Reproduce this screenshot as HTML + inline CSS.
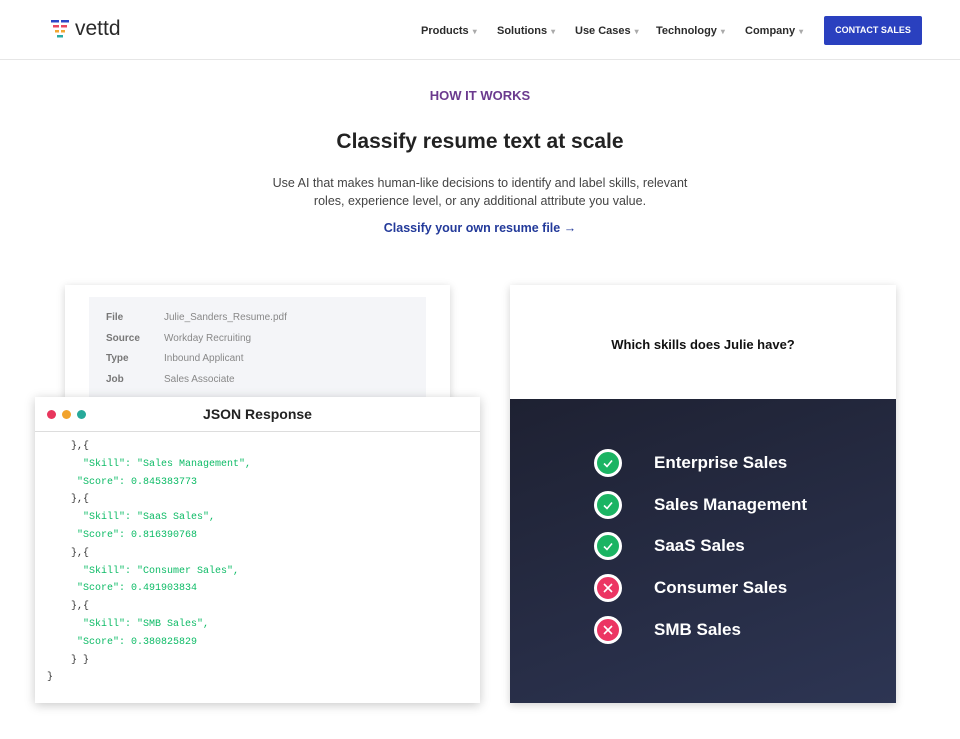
<!DOCTYPE html>
<html><head><meta charset="utf-8"><style>
*{margin:0;padding:0;box-sizing:border-box}
body{width:960px;height:739px;background:#fff;font-family:"Liberation Sans",sans-serif;position:relative;overflow:hidden;color:#222}
.hdr{position:absolute;left:0;top:0;width:960px;height:60px;border-bottom:1px solid #e6e6e6}
.nav{position:absolute;top:24px;font-size:11px;font-weight:bold;color:#2b2b2b}
.nav span{color:#aaa;font-size:8px;margin-left:4px}
.btn{position:absolute;left:824px;top:16px;width:98px;height:29px;background:#2a40bf;color:#fff;font-size:9px;font-weight:bold;text-align:center;line-height:29px;border-radius:2px}
.c{position:absolute;left:0;width:960px;text-align:center}
.card{position:absolute;background:#fff;box-shadow:0 2px 8px rgba(0,0,0,.18)}
.row{position:absolute;left:106px;font-size:10px;color:#888}
.row b{display:inline-block;width:58px;color:#777}
.code{position:absolute;left:12px;font-family:"Liberation Mono",monospace;font-size:10px;line-height:17.8px;color:#0dbb66;white-space:pre}
.code i{font-style:normal;color:#333}
.it{position:absolute;left:594px;height:28px;display:flex;align-items:center}
.ic{width:28px;height:28px;border-radius:50%;border:3px solid #fff;display:flex;align-items:center;justify-content:center}
.it span{margin-left:32px;color:#fff;font-weight:bold;font-size:17px}
</style></head><body>
<div class="hdr">
<svg style="position:absolute;left:51px;top:20px" width="20" height="18"><rect x="0" y="0" width="8" height="2.5" fill="#2c47c7"/><rect x="10" y="0" width="8" height="2.5" fill="#2c47c7"/><rect x="2" y="5" width="6" height="2.5" fill="#e8475f"/><rect x="10" y="5" width="6" height="2.5" fill="#e8475f"/><rect x="4" y="10" width="4" height="2.5" fill="#f2a531"/><rect x="10" y="10" width="4" height="2.5" fill="#f2a531"/><rect x="6" y="15" width="6" height="2.5" fill="#2aaba4"/></svg>
<div style="position:absolute;left:75px;top:17px;font-size:21px;color:#2a2a2a">vettd</div>
<div class="nav" style="left:421px;top:25px">Products<span>▾</span></div>
<div class="nav" style="left:497px;top:25px">Solutions<span>▾</span></div>
<div class="nav" style="left:575px;top:25px">Use Cases<span>▾</span></div>
<div class="nav" style="left:656px;top:25px">Technology<span>▾</span></div>
<div class="nav" style="left:745px;top:25px">Company<span>▾</span></div>
<div class="btn">CONTACT SALES</div>
</div>
<div class="c" style="top:88px;font-size:13px;font-weight:bold;color:#6b3a8e">HOW IT WORKS</div>
<div class="c" style="top:130px;font-size:21px;font-weight:bold;color:#222">Classify resume text at scale</div>
<div class="c" style="top:174px;font-size:12.5px;line-height:18px;color:#444">Use AI that makes human-like decisions to identify and label skills, relevant<br>roles, experience level, or any additional attribute you value.</div>
<div class="c" style="top:221px;font-size:12.5px;font-weight:bold;color:#233a9a">Classify your own resume file →</div>

<div class="card" style="left:65px;top:285px;width:385px;height:130px"></div>
<div style="position:absolute;left:89px;top:297px;width:337px;height:100px;background:#f4f5f8"></div>
<div class="row" style="top:312px"><b>File</b>Julie_Sanders_Resume.pdf</div>
<div class="row" style="top:333px"><b>Source</b>Workday Recruiting</div>
<div class="row" style="top:353px"><b>Type</b>Inbound Applicant</div>
<div class="row" style="top:374px"><b>Job</b>Sales Associate</div>

<div class="card" style="left:35px;top:397px;width:445px;height:306px;box-shadow:0 2px 10px rgba(0,0,0,.22)">
<div style="height:35px;border-bottom:1px solid #ddd;position:relative">
<div style="position:absolute;left:12px;top:13px;width:9px;height:9px;border-radius:50%;background:#e8365d"></div>
<div style="position:absolute;left:27px;top:13px;width:9px;height:9px;border-radius:50%;background:#f2a32c"></div>
<div style="position:absolute;left:42px;top:13px;width:9px;height:9px;border-radius:50%;background:#27a99a"></div>
<div style="position:absolute;left:0;width:445px;text-align:center;top:9px;font-size:14px;font-weight:bold;color:#222">JSON Response</div>
</div>
<div style="position:absolute;left:0;top:35px;width:445px;height:271px;overflow:hidden">
<div class="code" style="top:6px"><i>    },{</i>
      "Skill": "Sales Management",
     "Score": 0.845383773
<i>    },{</i>
      "Skill": "SaaS Sales",
     "Score": 0.816390768
<i>    },{</i>
      "Skill": "Consumer Sales",
     "Score": 0.491903834
<i>    },{</i>
      "Skill": "SMB Sales",
     "Score": 0.380825829
<i>    } }</i>
<i>}</i></div></div></div>

<div class="card" style="left:510px;top:285px;width:386px;height:418px;overflow:hidden">
<div style="position:absolute;top:52px;width:386px;text-align:center;font-size:13px;font-weight:bold;color:#111">Which skills does Julie have?</div>
<div style="position:absolute;top:114px;left:0;width:386px;height:304px;background:linear-gradient(160deg,#1e2132,#2d3553)"></div>
</div>
<div class="it" style="top:449px"><div class="ic" style="background:#1bb463"><svg width="14" height="14"><path d="M3 7.5l3 3 5-6" stroke="#fff" stroke-width="1.6" fill="none"/></svg></div><span>Enterprise Sales</span></div>
<div class="it" style="top:491px"><div class="ic" style="background:#1bb463"><svg width="14" height="14"><path d="M3 7.5l3 3 5-6" stroke="#fff" stroke-width="1.6" fill="none"/></svg></div><span>Sales Management</span></div>
<div class="it" style="top:532px"><div class="ic" style="background:#1bb463"><svg width="14" height="14"><path d="M3 7.5l3 3 5-6" stroke="#fff" stroke-width="1.6" fill="none"/></svg></div><span>SaaS Sales</span></div>
<div class="it" style="top:574px"><div class="ic" style="background:#ec3563"><svg width="14" height="14"><path d="M3 3l8 8M11 3l-8 8" stroke="#fff" stroke-width="1.6"/></svg></div><span>Consumer Sales</span></div>
<div class="it" style="top:616px"><div class="ic" style="background:#ec3563"><svg width="14" height="14"><path d="M3 3l8 8M11 3l-8 8" stroke="#fff" stroke-width="1.6"/></svg></div><span>SMB Sales</span></div>
</body></html>
